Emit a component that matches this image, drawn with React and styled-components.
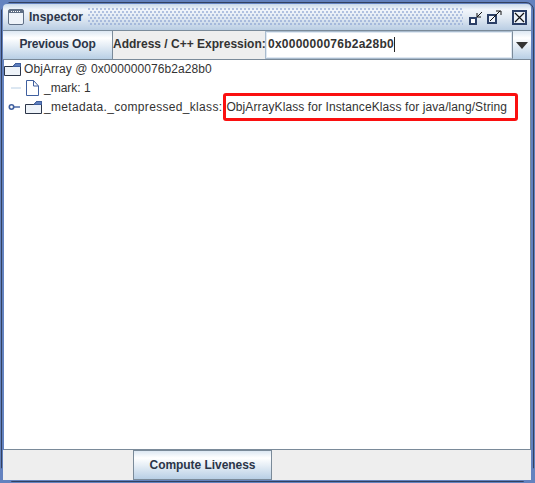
import styled, { createGlobalStyle } from "styled-components";

const GlobalStyle = createGlobalStyle`
  html, body {
    margin: 0;
    padding: 0;
    background: #6382bf;
  }
`;

const Window = styled.div`
  position: relative;
  width: 535px;
  height: 483px;
  box-sizing: border-box;
  display: flex;
  flex-direction: column;
  padding: 4px 4px 3px 3px;
  background: #6382bf;
  font-family: "Liberation Sans", Arial, sans-serif;
  color: #333333;
  &::before {
    content: "";
    position: absolute;
    inset: 2px 1px 1px 1px;
    border: 1px solid #33415f;
    border-radius: 8px;
    clip-path: polygon(8px 0, 100% 0, 100% 97%, 98% 100%, 2% 100%, 0 97%, 0 8px);
  }
`;
const TitleBar = styled.div`
  position: relative;
  height: 26px;
  flex: none;
  display: flex;
  align-items: center;
  padding: 0 4px 0 5px;
  border-radius: 4px 4px 0 0;
  background: linear-gradient(#c9d9ea 0%, #f2f6fb 22%, #dfe8f2 55%, #b9cde3 100%);
`;
const TitleText = styled.span`
  font-size: 12px;
  font-weight: bold;
  color: #2b3548;
  margin: 0 5px 0 5px;
`;
const Dots = styled.div`
  flex: 1;
  height: 18px;
  background-image: radial-gradient(circle at 1px 1px, #8ea5d2 0.6px, transparent 0.9px),
    radial-gradient(circle at 3px 4px, #8ea5d2 0.6px, transparent 0.9px);
  background-size: 4px 6px;
`;
const TitleIcons = styled.div`
  display: flex;
  align-items: center;
  margin-left: 6px;
`;
const TitleIcon = styled.svg`
  margin-left: ${(props) => props.$gap}px;
`;
const Toolbar = styled.div`
  position: relative;
  height: 30px;
  flex: none;
  display: flex;
  background: #eeeeee;
  border-top: 1px solid #7a8a99;
  border-bottom: 1px solid #7a8a99;
  box-sizing: border-box;
`;
const Button = styled.button`
  box-sizing: border-box;
  height: 100%;
  padding: 0 0 ${(props) => props.lift || 0}px;
  width: ${(props) => props.width}px;
  margin-left: ${(props) => props.offset || 0}px;
  border: 1px solid #7a8a99;
  border-width: ${(props) => props.edges};
  background: linear-gradient(#dde8f3 0%, #ffffff 25%, #b8cfe5 100%);
  font-family: inherit;
  font-size: 12px;
  font-weight: bold;
  letter-spacing: ${(props) => props.spacing}px;
  color: #2b3548;
`;
const FieldLabel = styled.span`
  align-self: center;
  padding-bottom: 2px;
  font-size: 12px;
  font-weight: bold;
  color: #333333;
  width: 152px;
  white-space: nowrap;
`;
const Field = styled.div`
  flex: 1;
  box-sizing: border-box;
  display: flex;
  align-items: center;
  padding: 0 0 2px 2px;
  background: #ffffff;
  border: 1px solid #a9bbcd;
  border-right-color: #7a8a99;
  box-shadow: inset 0 0 0 1px #dfe8f2;
  font-size: 12px;
  font-weight: bold;
  letter-spacing: 0.25px;
  color: #333333;
`;
const Caret = styled.span`
  width: 1px;
  height: 15px;
  background: #222222;
`;
const ComboArrow = styled.div`
  width: 18px;
  flex: none;
  display: flex;
  align-items: center;
  justify-content: center;
  background: linear-gradient(#dde8f3 0%, #ffffff 25%, #b8cfe5 100%);
`;
const Tree = styled.div`
  position: relative;
  flex: 1;
  box-sizing: border-box;
  display: flex;
  flex-direction: column;
  gap: 3px;
  padding-top: 1px;
  background: #ffffff;
  border-bottom: 1px solid #7a8a99;
  border-right: 1px solid #7a8a99;
  margin-left: 1px;
`;
const Row = styled.div`
  height: 16px;
  display: flex;
  align-items: center;
  padding-left: ${(props) => props.indent}px;
  font-size: 12px;
  color: #333333;
  white-space: nowrap;
`;
const RowIcon = styled.span`
  display: flex;
  margin-right: ${(props) => props.gap}px;
`;
const FieldName = styled.span`
  letter-spacing: ${(props) => props.spacing}px;
  margin-right: ${(props) => props.gap || 0}px;
`;
const Highlight = styled.div`
  position: absolute;
  left: 219px;
  top: 33px;
  width: 295px;
  height: 28px;
  box-sizing: border-box;
  border: 3px solid #fa1010;
  border-radius: 3px;
`;
const BottomBar = styled.div`
  position: relative;
  height: 30px;
  flex: none;
  display: flex;
  background: #eeeeee;
`;

const FolderIcon = () => (
  <svg width="17" height="14" viewBox="0 0 17 14">
    <path d="M.5 4.5H9L11.5 1.5H16.5V13.5H.5Z" fill="#eef3f9" stroke="#2b3548" />
    <path d="M9 4.5L11.5 1.5H16.5V4.5Z" fill="#5f7fbd" stroke="#3f5f9f" />
  </svg>
);

const FileIcon = () => (
  <svg width="13" height="16" viewBox="0 0 13 16">
    <path d="M.5 .5H7.5L12.5 6V15.5H.5Z" fill="#ffffff" stroke="#3f5f9f" />
    <path d="M7.5 .5V6H12.5" fill="none" stroke="#3f5f9f" />
  </svg>
);

const Handle = () => (
  <svg width="14" height="8" viewBox="0 0 14 8">
    <circle cx="3.5" cy="4" r="2.2" fill="#ffffff" stroke="#3f5f9f" strokeWidth="1.6" />
    <path d="M6 4H12" stroke="#3f5f9f" strokeWidth="1.4" />
  </svg>
);

const Line = () => (
  <svg width="10" height="2" viewBox="0 0 10 2">
    <path d="M0 1H10" stroke="#b8cfe5" />
  </svg>
);

const App = () => {
  return (
    <Window>
      <GlobalStyle />
      <TitleBar>
        <svg width="16" height="16" viewBox="0 0 16 16">
          <rect x=".5" y=".5" width="15" height="15" rx="1.5" fill="#eef3f9" stroke="#5f6f85" />
          <rect x="1" y="1" width="14" height="3" fill="#5f6f85" />
          <path d="M3 2.5H13" stroke="#ffffff" strokeDasharray="1 1" />
        </svg>
        <TitleText>Inspector</TitleText>
        <Dots />
        <TitleIcons>
          <TitleIcon $gap={0} width="15" height="15" viewBox="0 0 15 15">
            <rect x="1" y="8" width="6" height="6" fill="#ffffff" stroke="#2b3f66" strokeWidth="2" />
            <path d="M13 2L8 7M8 3V7H12" fill="none" stroke="#111111" />
          </TitleIcon>
          <TitleIcon $gap={3} width="15" height="15" viewBox="0 0 15 15">
            <rect x="1" y="5" width="8" height="8" fill="#eef3f9" stroke="#2b3f66" strokeWidth="2" />
            <path d="M3 11L13 1M9 1H14V5" fill="none" stroke="#111111" />
          </TitleIcon>
          <TitleIcon $gap={10} width="15" height="15" viewBox="0 0 15 15">
            <rect x="1" y="1" width="13" height="13" fill="#eef3f9" stroke="#2b3f66" strokeWidth="2" />
            <path d="M3 3L12 12M12 3L3 12" stroke="#111111" strokeWidth="1.2" />
          </TitleIcon>
        </TitleIcons>
      </TitleBar>
      <Toolbar>
        <Button width={110} lift={2} spacing={-0.15} edges="0 1px 0 0">Previous Oop</Button>
        <FieldLabel>Address / C++ Expression:</FieldLabel>
        <Field>
          0x000000076b2a28b0
          <Caret />
        </Field>
        <ComboArrow>
          <svg width="12" height="7" viewBox="0 0 12 7">
            <path d="M0 0H12L6 7Z" fill="#333333" />
          </svg>
        </ComboArrow>
      </Toolbar>
      <Tree>
        <Row indent={0}>
          <RowIcon gap={3}>
            <FolderIcon />
          </RowIcon>
          <FieldName spacing={0.07}>ObjArray @ 0x000000076b2a28b0</FieldName>
        </Row>
        <Row indent={7}>
          <RowIcon gap={5}>
            <Line />
          </RowIcon>
          <RowIcon gap={5}>
            <FileIcon />
          </RowIcon>
          _mark: 1
        </Row>
        <Row indent={4}>
          <RowIcon gap={3}>
            <Handle />
          </RowIcon>
          <RowIcon gap={2}>
            <FolderIcon />
          </RowIcon>
          <FieldName spacing={0.32} gap={4}>_metadata._compressed_klass:</FieldName>
          <FieldName spacing={0.1}>ObjArrayKlass for InstanceKlass for java/lang/String</FieldName>
        </Row>
        <Highlight />
      </Tree>
      <BottomBar>
        <Button width={139} offset={130} spacing={-0.05} edges="1px">Compute Liveness</Button>
      </BottomBar>
    </Window>
  );
};

export default App;
